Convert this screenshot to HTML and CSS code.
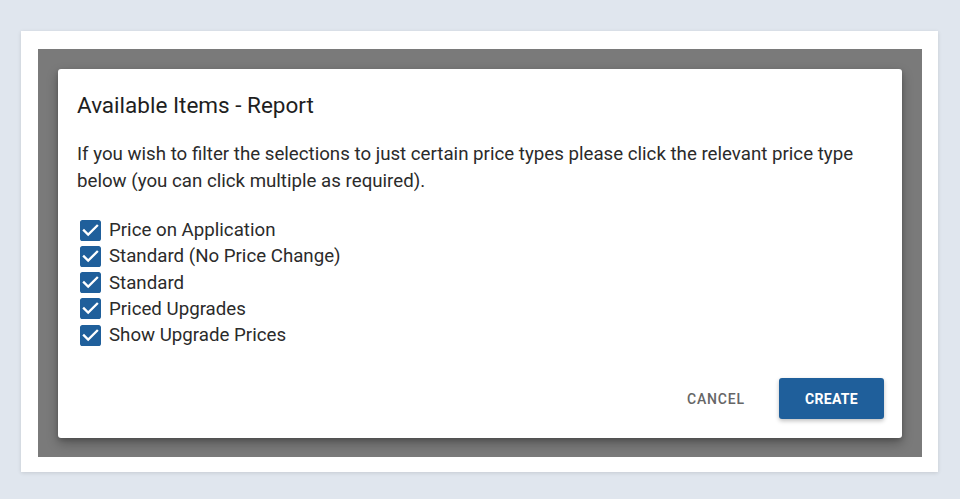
FILE: index.html
```html
<!DOCTYPE html>
<html lang="en">
<head>
    <meta charset="UTF-8">
    <meta name="viewport" content="width=device-width, initial-scale=1.0">
    <title>Available Items - Report</title>
    <link rel="stylesheet" href="styles.css">
</head>
<body>

    <div class="page-card">
        <div class="overlay">
            <div class="dialog">
                <h2 class="dialog-title">Available Items - Report</h2>

                <p class="dialog-text">If you wish to filter the selections to just certain price types please click the relevant price type below (you can click multiple as required).</p>

                <div class="check-list">
                    <label class="check-row">
                        <svg class="check-icon" viewBox="3 3 18 18"><path d="M19 3H5c-1.11 0-2 .9-2 2v14c0 1.1.89 2 2 2h14c1.11 0 2-.9 2-2V5c0-1.1-.89-2-2-2zm-9 14l-5-5 1.41-1.41L10 14.17l7.59-7.59L19 8l-9 9z"/></svg>
                        <span>Price on Application</span>
                    </label>
                    <label class="check-row">
                        <svg class="check-icon" viewBox="3 3 18 18"><path d="M19 3H5c-1.11 0-2 .9-2 2v14c0 1.1.89 2 2 2h14c1.11 0 2-.9 2-2V5c0-1.1-.89-2-2-2zm-9 14l-5-5 1.41-1.41L10 14.17l7.59-7.59L19 8l-9 9z"/></svg>
                        <span>Standard (No Price Change)</span>
                    </label>
                    <label class="check-row">
                        <svg class="check-icon" viewBox="3 3 18 18"><path d="M19 3H5c-1.11 0-2 .9-2 2v14c0 1.1.89 2 2 2h14c1.11 0 2-.9 2-2V5c0-1.1-.89-2-2-2zm-9 14l-5-5 1.41-1.41L10 14.17l7.59-7.59L19 8l-9 9z"/></svg>
                        <span>Standard</span>
                    </label>
                    <label class="check-row">
                        <svg class="check-icon" viewBox="3 3 18 18"><path d="M19 3H5c-1.11 0-2 .9-2 2v14c0 1.1.89 2 2 2h14c1.11 0 2-.9 2-2V5c0-1.1-.89-2-2-2zm-9 14l-5-5 1.41-1.41L10 14.17l7.59-7.59L19 8l-9 9z"/></svg>
                        <span>Priced Upgrades</span>
                    </label>
                    <label class="check-row">
                        <svg class="check-icon" viewBox="3 3 18 18"><path d="M19 3H5c-1.11 0-2 .9-2 2v14c0 1.1.89 2 2 2h14c1.11 0 2-.9 2-2V5c0-1.1-.89-2-2-2zm-9 14l-5-5 1.41-1.41L10 14.17l7.59-7.59L19 8l-9 9z"/></svg>
                        <span>Show Upgrade Prices</span>
                    </label>
                </div>

                <div class="dialog-actions">
                    <button class="btn btn-text">Cancel</button>
                    <button class="btn btn-primary">Create</button>
                </div>
            </div>
        </div>
    </div>

</body>
</html>
```

FILE: styles.css
```css
body {
    font-family: Roboto, "Liberation Sans", Arial, sans-serif;
    background-color: #e0e6ee;
    color: #212121;
    margin: 0;
    padding: 31px 22px 27px 21px;
}

.page-card {
    width: 917px;
    height: 441px;
    box-sizing: border-box;
    padding: 18px 16px 15px 17px;
    background-color: #fff;
    box-shadow: 0 1px 4px rgba(0, 0, 0, 0.12);
}

.overlay {
    height: 100%;
    box-sizing: border-box;
    padding: 20px;
    background-color: #7a7a7a;
}

.dialog {
    height: 369px;
    box-sizing: border-box;
    padding: 20px 18px 19px 19px;
    background-color: #fff;
    border-radius: 3px;
    box-shadow: 0 5px 12px rgba(0, 0, 0, 0.3), 0 2px 4px rgba(0, 0, 0, 0.15);
    display: flex;
    flex-direction: column;
}

.dialog-title {
    margin: 0;
    font-size: 22.5px;
    font-weight: 400;
    line-height: 32px;
    color: #1e1e1e;
}

.dialog-text {
    margin: 20px 0 0;
    font-size: 18.7px;
    line-height: 27px;
    color: #2b2b2b;
}

.check-list {
    margin-top: 22px;
    display: flex;
    flex-direction: column;
}

.check-row {
    display: flex;
    align-items: center;
    gap: 8px;
    height: 26.25px;
    font-size: 18.7px;
    color: #2b2b2b;
    padding-left: 3px;
}

.check-icon {
    width: 21px;
    height: 21px;
    fill: #1f5f9b;
}

.dialog-actions {
    margin-top: auto;
    display: flex;
    justify-content: flex-end;
    align-items: center;
    gap: 18px;
}

.btn {
    font-family: Roboto, "Liberation Sans", Arial, sans-serif;
    font-size: 14px;
    font-weight: 500;
    text-transform: uppercase;
    letter-spacing: 0.06em;
    height: 41px;
    border: none;
    border-radius: 3px;
    cursor: pointer;
}

.btn-text {
    background: none;
    color: #666;
    padding: 0 16px;
}

.btn-primary {
    width: 105px;
    background-color: #1f5f9b;
    color: #fff;
    font-weight: 700;
    letter-spacing: 0.02em;
    box-shadow: 0 2px 4px rgba(0, 0, 0, 0.25);
}
```
